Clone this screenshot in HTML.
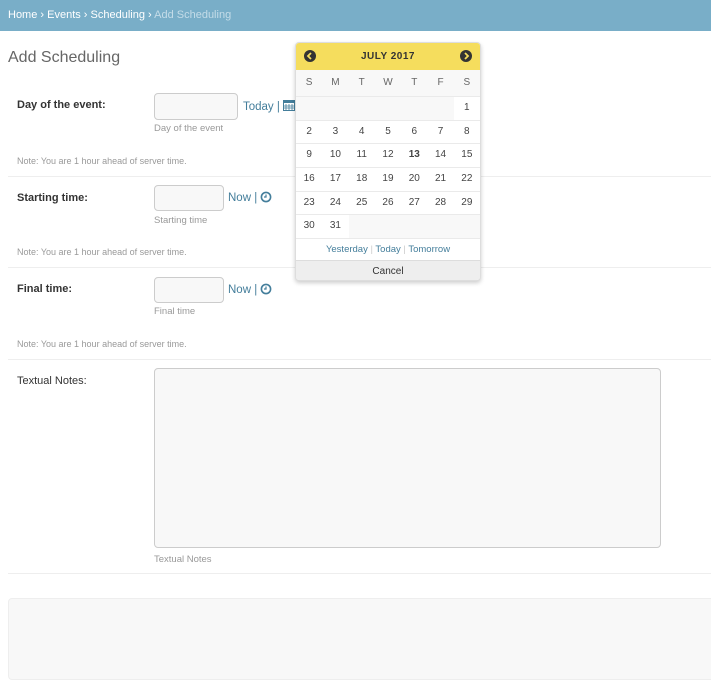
<!DOCTYPE html>
<html><head><style>
body{margin:0;width:711px;height:644px;overflow:hidden;background:#fff;font-family:"Liberation Sans",sans-serif;position:relative;color:#333}
.a{position:absolute}
#hdr{left:0;top:0;width:711px;height:31px;background:#79aec8;color:#fff;font-size:11px;line-height:31px;padding-left:8px;box-sizing:border-box;white-space:nowrap}
#hdr .g{color:#c4dce8}
h1{position:absolute;left:8px;top:49px;margin:0;font-size:16px;font-weight:normal;color:#666}
.lbl{font-size:11px;font-weight:bold;color:#333}
.inp{border:1px solid #ccc;border-radius:4px;background:#f8f8f8;box-sizing:border-box}
.help{font-size:9.5px;color:#999}
.note{font-size:9px;color:#999}
.sep{height:1px;background:#eee;left:8px;width:703px}
.lnk{color:#447e9b;font-size:11.5px}
#cal{left:295px;top:42px;width:186px;height:239px;border:1px solid #ddd;border-radius:4px;box-shadow:0 2px 4px rgba(0,0,0,.2);background:#fff;overflow:hidden;box-sizing:border-box}
.row{display:flex;height:23.7px;box-sizing:border-box;border-top:1px solid #eaeaea}
.row div{flex:1;text-align:center;font-size:10px;line-height:22px;color:#444}
.row div.e{background:#f8f8f8}
</style></head><body>
<div id="hdr" class="a">Home › Events › Scheduling › <span class="g">Add Scheduling</span></div>
<h1>Add Scheduling</h1>

<div class="a lbl" style="left:17px;top:99px">Day of the event:</div>
<div class="a inp" style="left:154px;top:93px;width:84px;height:27px"></div>
<div class="a lnk" style="left:243px;top:99px">Today | <svg width="12" height="12" viewBox="0 0 12 12" style="vertical-align:-1px"><rect x="0.5" y="1.5" width="11" height="10" fill="none" stroke="#447e9b"/><rect x="0.5" y="1.5" width="11" height="2.5" fill="#447e9b"/><path d="M3 5v6M6 5v6M9 5v6M1 7h10M1 9h10" stroke="#447e9b" stroke-width=".8"/></svg></div>
<div class="a help" style="left:154px;top:123px">Day of the event</div>
<div class="a note" style="left:17px;top:156px">Note: You are 1 hour ahead of server time.</div>
<div class="a sep" style="top:176px"></div>

<div class="a lbl" style="left:17px;top:192px">Starting time:</div>
<div class="a inp" style="left:154px;top:185px;width:70px;height:26px"></div>
<div class="a lnk" style="left:228px;top:191px">Now | <svg width="12" height="12" viewBox="0 0 12 12" style="vertical-align:-2px"><circle cx="6" cy="6" r="4.6" fill="none" stroke="#447e9b" stroke-width="1.6"/><path d="M6 3.5V6H4" fill="none" stroke="#447e9b" stroke-width="1.2"/></svg></div>
<div class="a help" style="left:154px;top:215px">Starting time</div>
<div class="a note" style="left:17px;top:247px">Note: You are 1 hour ahead of server time.</div>
<div class="a sep" style="top:267px"></div>

<div class="a lbl" style="left:17px;top:283px">Final time:</div>
<div class="a inp" style="left:154px;top:277px;width:70px;height:26px"></div>
<div class="a lnk" style="left:228px;top:283px">Now | <svg width="12" height="12" viewBox="0 0 12 12" style="vertical-align:-2px"><circle cx="6" cy="6" r="4.6" fill="none" stroke="#447e9b" stroke-width="1.6"/><path d="M6 3.5V6H4" fill="none" stroke="#447e9b" stroke-width="1.2"/></svg></div>
<div class="a help" style="left:154px;top:306px">Final time</div>
<div class="a note" style="left:17px;top:339px">Note: You are 1 hour ahead of server time.</div>
<div class="a sep" style="top:359px"></div>

<div class="a" style="left:17px;top:375px;font-size:11px;color:#333">Textual Notes:</div>
<div class="a inp" style="left:154px;top:368px;width:507px;height:180px"></div>
<div class="a help" style="left:154px;top:554px">Textual Notes</div>
<div class="a sep" style="top:573px"></div>

<div class="a" style="left:8px;top:598px;width:710px;height:80px;background:#f8f8f8;border:1px solid #eee;border-radius:4px"></div>

<div id="cal" class="a">
<div style="height:27px;background:#f5dd5d;position:relative;font-size:10px;font-weight:bold;color:#333;text-align:center;line-height:27px;letter-spacing:.5px">JULY 2017
<svg class="a" style="left:8px;top:7px" width="12" height="12" viewBox="0 0 12 12"><circle cx="6" cy="6" r="6" fill="#333"/><path d="M7 3L4 6l3 3" fill="none" stroke="#f5dd5d" stroke-width="1.8"/></svg>
<svg class="a" style="left:164px;top:7px" width="12" height="12" viewBox="0 0 12 12"><circle cx="6" cy="6" r="6" fill="#333"/><path d="M5 3l3 3-3 3" fill="none" stroke="#f5dd5d" stroke-width="1.8"/></svg>
</div>
<div class="row" style="height:26px;border:0;background:#f8f8f8"><div style="line-height:26px;color:#666">S</div><div style="line-height:26px;color:#666">M</div><div style="line-height:26px;color:#666">T</div><div style="line-height:26px;color:#666">W</div><div style="line-height:26px;color:#666">T</div><div style="line-height:26px;color:#666">F</div><div style="line-height:26px;color:#666">S</div></div>
<div class="row"><div class="e"></div><div class="e"></div><div class="e"></div><div class="e"></div><div class="e"></div><div class="e"></div><div>1</div></div>
<div class="row"><div>2</div><div>3</div><div>4</div><div>5</div><div>6</div><div>7</div><div>8</div></div>
<div class="row"><div>9</div><div>10</div><div>11</div><div>12</div><div style="font-weight:bold">13</div><div>14</div><div>15</div></div>
<div class="row"><div>16</div><div>17</div><div>18</div><div>19</div><div>20</div><div>21</div><div>22</div></div>
<div class="row"><div>23</div><div>24</div><div>25</div><div>26</div><div>27</div><div>28</div><div>29</div></div>
<div class="row"><div>30</div><div>31</div><div class="e"></div><div class="e"></div><div class="e"></div><div class="e"></div><div class="e"></div></div>
<div style="height:22px;line-height:22px;text-align:center;font-size:9.5px;color:#447e9b;border-top:1px solid #eaeaea;box-sizing:border-box">Yesterday<span style="color:#ccc"> | </span>Today<span style="color:#ccc"> | </span>Tomorrow</div>
<div style="height:22px;line-height:21px;text-align:center;font-size:10px;color:#333;background:#eee;border-top:1px solid #ddd;box-sizing:border-box">Cancel</div>
</div>
</body></html>
